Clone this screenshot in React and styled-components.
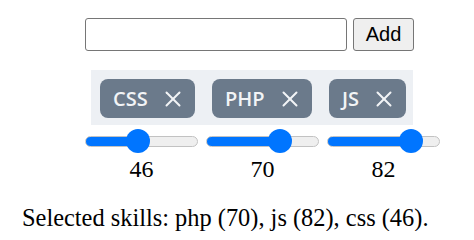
import React, { useState } from "react";
import styled, { createGlobalStyle } from "styled-components";

const Global = createGlobalStyle`
  html, body { margin: 0; padding: 0; background: #ffffff; }
  body { font-family: "Liberation Serif", "Times New Roman", serif; font-size: 24px; color: #000; }
`;

const Page = styled.div`
  display: flex;
  flex-direction: column;
  padding-top: 18px;
`;

const Form = styled.form`
  display: flex;
  gap: 6px;
  margin-left: 85px;
`;

const TextInput = styled.input`
  box-sizing: border-box;
  width: 262px;
  height: 33px;
  border: 1px solid #767676;
  border-radius: 3px;
  padding: 2px 4px;
  font: 20px "Liberation Sans", Arial, sans-serif;
  outline: none;
`;

const AddButton = styled.button`
  box-sizing: border-box;
  width: 61px;
  height: 33px;
  border: 1px solid #767676;
  border-radius: 3px;
  background: #efefef;
  font: 20px "Liberation Sans", Arial, sans-serif;
  color: #000;
  padding: 0;
`;

const TagBar = styled.div`
  box-sizing: border-box;
  display: flex;
  justify-content: space-between;
  margin: 19px 0 0 91px;
  width: 322px;
  height: 55px;
  padding: 9px 7px 7px 9px;
  background: #edf0f4;
`;

const Tag = styled.div`
  box-sizing: border-box;
  display: flex;
  align-items: center;
  gap: 17px;
  height: 39px;
  padding: 0 14px 0 13px;
  border-radius: 8px;
  background: #6b7a8b;
  color: #f2f4f6;
  font: 600 20px "Open Sans", "Noto Sans", sans-serif;
`;

const RemoveIcon = styled.svg`
  width: 16px;
  height: 16px;
  display: block;
`;

const SliderRow = styled.div`
  display: flex;
  gap: 8px;
  margin: 4px 0 0 85px;
`;

const SliderCol = styled.div`
  display: flex;
  flex-direction: column;
  align-items: center;
  width: 113px;
  gap: 3px;
`;

const Range = styled.input`
  -webkit-appearance: none;
  appearance: none;
  width: 113px;
  height: 24px;
  margin: 0;
  background: transparent;

  &::-webkit-slider-runnable-track {
    box-sizing: border-box;
    height: 11px;
    border-radius: 6px;
    border: 1px solid #c2c2c2;
    background: linear-gradient(
      to right,
      #0075ff 0,
      #0075ff ${(p) => p.$fill}px,
      #efefef ${(p) => p.$fill}px,
      #efefef 100%
    );
  }
  &::-webkit-slider-thumb {
    -webkit-appearance: none;
    width: 24px;
    height: 24px;
    border-radius: 50%;
    background: #0075ff;
    border: none;
    margin-top: -7.5px;
  }
`;

const Value = styled.div`
  font-size: 24px;
  line-height: 27px;
`;

const Summary = styled.p`
  margin: 21px 0 0 22px;
  font-size: 24.4px;
  line-height: 27px;
`;

function X() {
  return (
    <RemoveIcon viewBox="0 0 16 16" fill="none" stroke="currentColor" strokeWidth="2" strokeLinecap="round">
      <line x1="1.5" y1="1.5" x2="14.5" y2="14.5" />
      <line x1="14.5" y1="1.5" x2="1.5" y2="14.5" />
    </RemoveIcon>
  );
}

export default function App() {
  const [skills, setSkills] = useState([
    { name: "css", value: 46 },
    { name: "php", value: 70 },
    { name: "js", value: 82 },
  ]);
  const order = ["php", "js", "css"];
  const summary = order
    .map((n) => skills.find((s) => s.name === n))
    .filter(Boolean)
    .map((s) => `${s.name} (${s.value})`)
    .join(", ");

  return (
    <>
      <Global />
      <Page>
        <Form onSubmit={(e) => e.preventDefault()}>
          <TextInput type="text" />
          <AddButton type="submit">Add</AddButton>
        </Form>
        <TagBar>
          {skills.map((s) => (
            <Tag key={s.name}>
              {s.name.toUpperCase()}
              <X />
            </Tag>
          ))}
        </TagBar>
        <SliderRow>
          {skills.map((s, i) => (
            <SliderCol key={s.name}>
              <Range
                type="range"
                min="0"
                max="100"
                value={s.value}
                $fill={12 + (s.value / 100) * 89}
                onChange={(e) => {
                  const v = Number(e.target.value);
                  setSkills((arr) => arr.map((x, j) => (j === i ? { ...x, value: v } : x)));
                }}
              />
              <Value>{s.value}</Value>
            </SliderCol>
          ))}
        </SliderRow>
        <Summary>Selected skills: {summary}.</Summary>
      </Page>
    </>
  );
}
